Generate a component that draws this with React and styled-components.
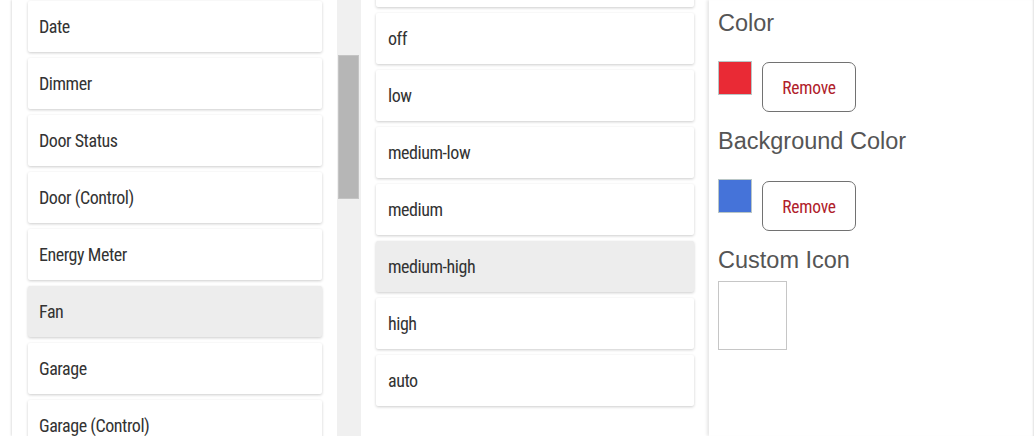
import React from "react"
import styled, { createGlobalStyle } from "styled-components"

const GlobalStyle = createGlobalStyle`
  html, body {
    margin: 0;
    padding: 0;
    background: #fff;
    overflow: hidden;
  }
`

const condensed = `"Roboto Condensed", "Liberation Sans Narrow", "DejaVu Sans Condensed", sans-serif`

const Page = styled.div`
  display: flex;
  height: 436px;
  overflow: hidden;
  padding-left: 12px;
  background: #fff;
`

const TypeColumn = styled.div`
  display: flex;
  width: 349px;
  flex-shrink: 0;
  box-shadow: -1px 0 2px rgba(0, 0, 0, 0.12);
  overflow: hidden;
`

const ListArea = styled.div`
  flex: 1;
  display: flex;
  flex-direction: column;
  gap: 6px;
  padding: ${({ $top }) => $top} 15px 0 16px;
`

const ScrollTrack = styled.div`
  width: 24px;
  flex-shrink: 0;
  background: #f0f0f0;
  padding: 55px 2px 0 1px;
  box-sizing: border-box;
`

const ScrollThumb = styled.div`
  height: 144px;
  background: #b6b6b6;
  box-shadow: inset 0 0 0 1px #c4c4c4;
`

const StateColumn = styled.div`
  width: 348px;
  flex-shrink: 0;
  overflow: hidden;
  background: #fff;
`

const StateList = styled.div`
  display: flex;
  flex-direction: column;
  gap: 6px;
  padding: 0 15px;
  margin-top: -44px;
`

const Item = styled.div`
  height: 51px;
  flex-shrink: 0;
  display: flex;
  align-items: center;
  padding-left: ${({ $indent }) => $indent}px;
  background: ${({ $selected }) => ($selected ? "#ededed" : "#fff")};
  box-shadow: 0 1px 3px rgba(0, 0, 0, 0.2);
  border-radius: 2px;
  font-family: ${condensed};
  font-stretch: condensed;
  font-size: 18px;
  letter-spacing: -0.45px;
  color: #333;
`

const SettingsPanel = styled.div`
  flex: 1;
  padding: 9px 0 0 9px;
  box-shadow: -2px 0 3px rgba(0, 0, 0, 0.1), inset -2px 0 2px -1px rgba(0, 0, 0, 0.12);
  font-family: "Liberation Sans", Arial, sans-serif;
`

const Section = styled.section`
  margin-bottom: 15px;
`

const Heading = styled.h2`
  margin: 0 0 ${({ $gap }) => $gap}px;
  font-size: 23.5px;
  font-weight: 400;
  line-height: 28.8px;
  color: #555;
`

const ColorRow = styled.div`
  display: flex;
  align-items: flex-start;
  gap: 10px;
`

const Swatch = styled.div`
  width: 34px;
  height: 34px;
  box-sizing: border-box;
  border: 1px solid #b9c6c6;
  background: ${({ $color }) => $color};
`

const RemoveButton = styled.button`
  width: 94px;
  height: 50px;
  margin-top: ${({ $offset }) => $offset}px;
  background: #fff;
  border: 1px solid #727272;
  border-radius: 7px;
  color: #b0202a;
  font-family: ${condensed};
  font-stretch: condensed;
  font-size: 17.5px;
  letter-spacing: -0.2px;
  padding: 3px 0 0;
  cursor: pointer;
`

const IconBox = styled.div`
  width: 69px;
  height: 69px;
  box-sizing: border-box;
  border: 1px solid #c6c6c6;
`

const types = [
  "Date",
  "Dimmer",
  "Door Status",
  "Door (Control)",
  "Energy Meter",
  "Fan",
  "Garage",
  "Garage (Control)",
]

// first entry is scrolled out of view above the panel
const states = ["", "off", "low", "medium-low", "medium", "medium-high", "high", "auto"]

const App = () => {
  return (
    <>
      <GlobalStyle />
      <Page>
        <TypeColumn>
          <ListArea $top="1px">
            {types.map((t) => (
              <Item key={t} $indent={11} $selected={t === "Fan"}>
                {t}
              </Item>
            ))}
          </ListArea>
          <ScrollTrack>
            <ScrollThumb />
          </ScrollTrack>
        </TypeColumn>
        <StateColumn>
          <StateList>
            {states.map((s, i) => (
              <Item key={i} $indent={12} $selected={s === "medium-high"}>
                {s}
              </Item>
            ))}
          </StateList>
        </StateColumn>
        <SettingsPanel>
          <Section>
            <Heading $gap={23}>Color</Heading>
            <ColorRow>
              <Swatch $color="#e92a35" />
              <RemoveButton $offset={1}>Remove</RemoveButton>
            </ColorRow>
          </Section>
          <Section>
            <Heading $gap={23}>Background Color</Heading>
            <ColorRow>
              <Swatch $color="#4573d9" />
              <RemoveButton $offset={2}>Remove</RemoveButton>
            </ColorRow>
          </Section>
          <Section>
            <Heading $gap={7}>Custom Icon</Heading>
            <IconBox />
          </Section>
        </SettingsPanel>
      </Page>
    </>
  )
}

export default App
